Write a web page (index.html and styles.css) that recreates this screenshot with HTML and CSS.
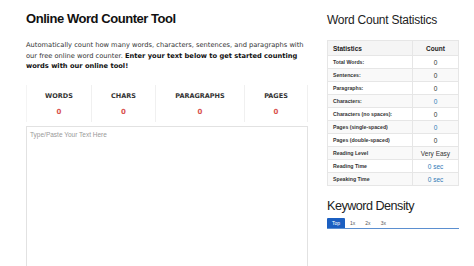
FILE: index.html
```html
<!DOCTYPE html>
<html lang="en">
<head>
    <meta charset="UTF-8">
    <meta name="viewport" content="width=device-width, initial-scale=1.0">
    <title>Online Word Counter Tool</title>
    <link rel="stylesheet" href="styles.css">
</head>
<body>

    <div class="page">
        <div class="main">
            <h1>Online Word Counter Tool</h1>
            <p class="intro">Automatically count how many words, characters, sentences, and paragraphs with our free online word counter. <b>Enter your text below to get started counting words with our online tool!</b></p>

            <div class="counts">
                <div class="count-box"><span class="label">WORDS</span><span class="num">0</span></div>
                <div class="count-box"><span class="label">CHARS</span><span class="num">0</span></div>
                <div class="count-box"><span class="label">PARAGRAPHS</span><span class="num">0</span></div>
                <div class="count-box"><span class="label">PAGES</span><span class="num">0</span></div>
            </div>

            <textarea class="text-input" placeholder="Type/Paste Your Text Here"></textarea>
        </div>

        <div class="side">
            <h2>Word Count Statistics</h2>
            <table class="stats">
                <tr><th>Statistics</th><th>Count</th></tr>
                <tr><td>Total Words:</td><td>0</td></tr>
                <tr><td>Sentences:</td><td>0</td></tr>
                <tr><td>Paragraphs:</td><td>0</td></tr>
                <tr><td>Characters:</td><td class="link">0</td></tr>
                <tr><td>Characters (no spaces):</td><td>0</td></tr>
                <tr><td>Pages (single-spaced)</td><td class="link">0</td></tr>
                <tr><td>Pages (double-spaced)</td><td>0</td></tr>
                <tr><td>Reading Level</td><td>Very Easy</td></tr>
                <tr><td>Reading Time</td><td class="link">0 sec</td></tr>
                <tr><td>Speaking Time</td><td class="link">0 sec</td></tr>
            </table>

            <h2 class="kd">Keyword Density</h2>
            <div class="tabs">
                <span class="tab active">Top</span>
                <span class="tab">1x</span>
                <span class="tab">2x</span>
                <span class="tab">3x</span>
            </div>
        </div>
    </div>

</body>
</html>
```

FILE: styles.css
```css
body {
    margin: 0;
    padding: 0;
    background-color: #fff;
    font-family: "Liberation Sans", Arial, sans-serif;
    color: #222;
    overflow: hidden;
}
.page {
    display: flex;
    gap: 19px;
    padding: 11px 0 0 26px;
}
.main {
    width: 282px;
}
h1 {
    margin: 0;
    font-size: 13px;
    letter-spacing: -0.45px;
    font-weight: bold;
    color: #111;
    line-height: 16px;
}
.intro {
    margin: 13px 0 0;
    font-family: "DejaVu Sans", Verdana, sans-serif;
    font-size: 6.7px;
    line-height: 10.5px;
    color: #333;
}
.intro b {
    color: #111;
}
.counts {
    display: grid;
    grid-template-columns: 66px 64px 89px 63px;
    margin-top: 13px;
    height: 37px;
}
.count-box {
    display: flex;
    flex-direction: column;
    align-items: center;
    justify-content: center;
    gap: 8px;
    padding-top: 1px;
    border-right: 1px solid #f0f0f0;
    font-family: "DejaVu Sans", Verdana, sans-serif;
    font-weight: bold;
}
.count-box:first-child {
    border-left: 1px solid #f4f4f4;
}
.count-box .label {
    font-size: 6.5px;
    color: #333;
}
.count-box .num {
    font-size: 7px;
    color: #d9534f;
}
.text-input {
    display: block;
    box-sizing: border-box;
    width: 282px;
    height: 141px;
    margin-top: 4px;
    border: 1px solid #e2e2e2;
    padding: 4px 3px;
    resize: none;
    font-family: "Liberation Sans", Arial, sans-serif;
    font-size: 6.5px;
}
.text-input::placeholder {
    color: #999;
}
.side {
    width: 132px;
}
h2 {
    margin: 2px 0 0;
    font-size: 12px;
    letter-spacing: -0.25px;
    font-weight: normal;
    color: #222;
    line-height: 14px;
}
.stats {
    margin-top: 13px;
    width: 132px;
    border-collapse: collapse;
    font-size: 5.2px;
}
.stats th, .stats td {
    border: 1px solid #e6e6e6;
    padding: 0 5px;
    height: 12px;
}
.stats th {
    height: 14px;
    background-color: #f5f5f5;
    font-size: 6.5px;
    text-align: left;
}
.stats th:last-child {
    text-align: center;
}
.stats td:first-child {
    width: 74px;
    font-weight: bold;
    color: #333;
}
.stats td:last-child {
    text-align: center;
    font-size: 6.5px;
    color: #333;
}
.stats tr:nth-child(odd) td {
    background-color: #f9f9f9;
}
.stats td.link {
    color: #337ab7;
}
.kd {
    margin-top: 12px;
    font-size: 12.6px;
    letter-spacing: -0.5px;
    line-height: 16px;
}
.tabs {
    display: flex;
    margin-top: 4px;
    border-bottom: 1px solid #5b8fd0;
}
.tab {
    padding: 0 5px;
    height: 10px;
    line-height: 10px;
    font-size: 5px;
    color: #555;
}
.tab.active {
    background-color: #1b5fc1;
    color: #fff;
    padding: 0 5px;
    border-radius: 1px 1px 0 0;
}
```
